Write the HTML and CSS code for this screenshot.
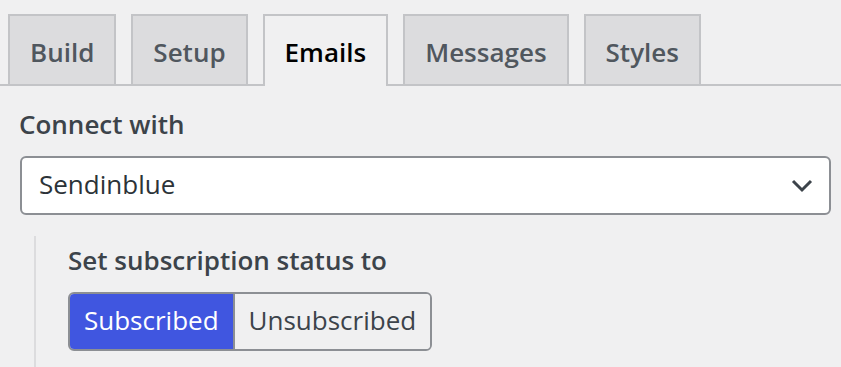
FILE: index.html
```html
<!DOCTYPE html>
<html>
<head>
<meta charset="utf-8">
<link rel="stylesheet" href="styles.css">
</head>
<body>
<div class="tabs">
  <div class="tab">Build</div>
  <div class="tab">Setup</div>
  <div class="tab active">Emails</div>
  <div class="tab">Messages</div>
  <div class="tab">Styles</div>
</div>
<div class="content">
  <div class="label">Connect with</div>
  <div class="select">
    <span>Sendinblue</span>
    <svg class="chev" width="22" height="14" viewBox="0 0 22 14"><path d="M2 2 L11 11 L20 2" fill="none" stroke="#3c434a" stroke-width="3"/></svg>
  </div>
  <div class="sub">
    <div class="label sublabel">Set subscription status to</div>
    <div class="btngroup">
      <div class="btn on">Subscribed</div>
      <div class="btn">Unsubscribed</div>
    </div>
  </div>
</div>
</body>
</html>
```
FILE: styles.css
```css
html, body {
  margin: 0;
  padding: 0;
  background: #f0f0f1;
  font-family: "Open Sans", "Noto Sans", sans-serif;
  height: 100%;
  overflow: hidden;
}
.tabs {
  display: flex;
  align-items: flex-end;
  gap: 15px;
  padding: 14px 0 0 8px;
  border-bottom: 2px solid #c3c4c7;
  height: 70px;
  box-sizing: content-box;
}
.tab {
  height: 70px;
  box-sizing: border-box;
  border: 2px solid #c3c4c7;
  border-bottom: 0;
  background: #dcdcde;
  color: #50575e;
  font-size: 26px;
  font-weight: 600;
  padding: 3px 20px 0;
  display: flex;
  align-items: center;
  justify-content: center;
}
.tab.active {
  background: #f0f0f1;
  color: #000;
  height: 72px;
  margin-bottom: -2px;
  padding-bottom: 2px;
}
.content {
  padding: 23px 10px 0 19px;
}
.label {
  font-size: 26px;
  font-weight: 600;
  color: #3c434a;
  line-height: 31px;
}
.select {
  margin-top: 16px;
  margin-left: 1px;
  height: 59px;
  box-sizing: border-box;
  border: 2px solid #8c8f94;
  border-radius: 6px;
  background: #fff;
  display: flex;
  align-items: center;
  justify-content: space-between;
  padding: 0 16px 3px 17px;
  font-size: 26px;
  color: #2c3338;
}
.chev {
  display: block;
  margin-top: 3px;
}
.sub {
  margin-top: 21px;
  margin-left: 15px;
  border-left: 2px solid #dcdcde;
  padding: 9px 0 16px 32px;
}
.btngroup {
  margin-top: 16px;
  display: inline-flex;
  height: 59px;
  box-sizing: border-box;
  border: 2px solid #8c8f94;
  border-radius: 6px;
  overflow: hidden;
}
.btn {
  display: flex;
  align-items: center;
  padding: 0 14px 3px;
  font-size: 26px;
  color: #3c434a;
  background: #f0f0f1;
}
.btn.on {
  background: #4056e0;
  color: #fff;
  border-right: 2px solid #8c8f94;
}
```
